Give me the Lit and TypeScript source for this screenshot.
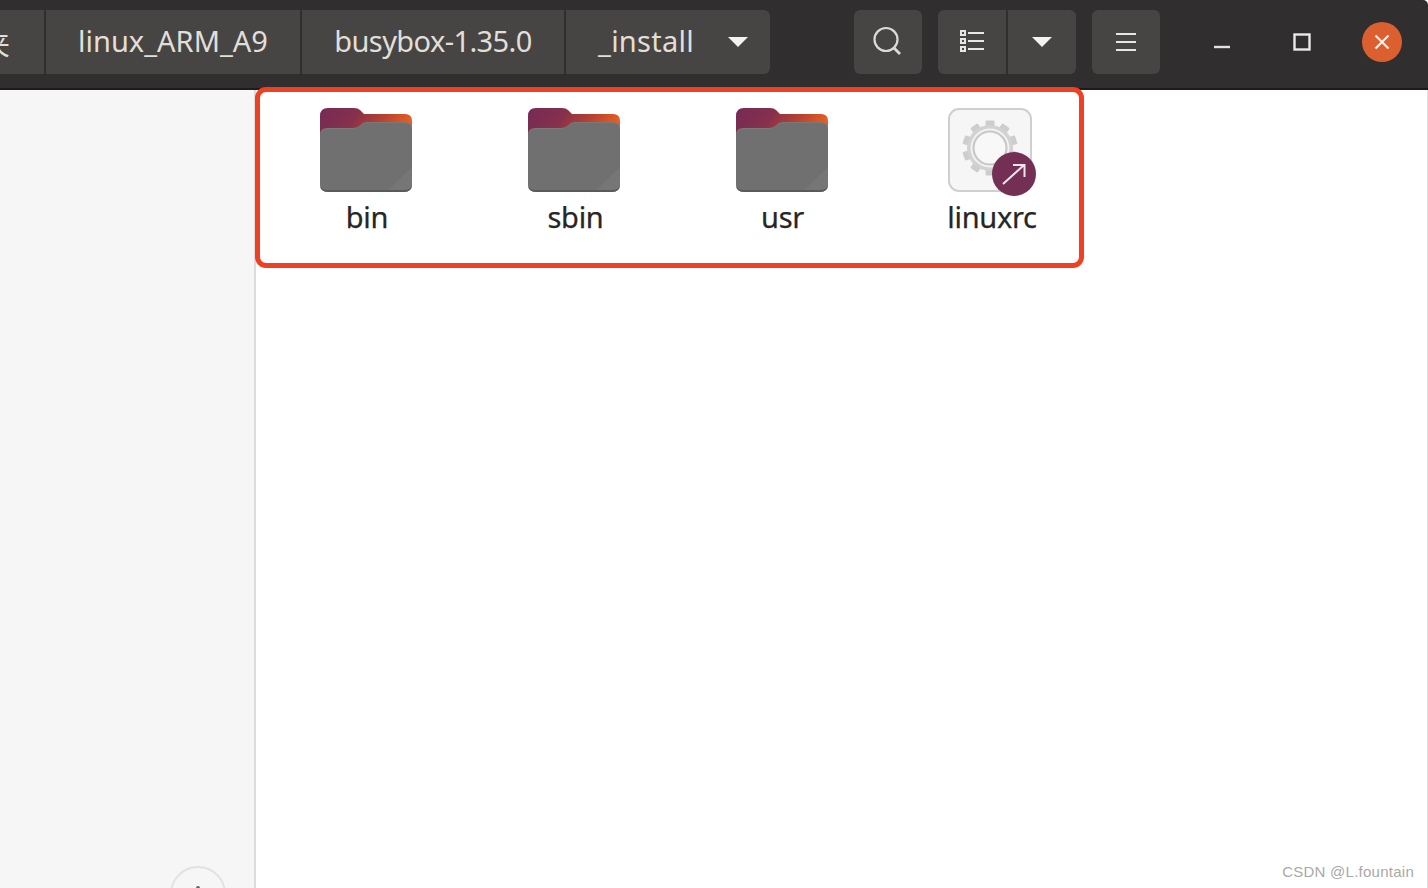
import { LitElement, html, css, svg } from "lit";
import { customElement } from "lit/decorators.js";

const folder = () => html`<svg class="icon soft" viewBox="0 0 92 84" width="92" height="84">
  <defs>
    <linearGradient id="fg" x1="0" y1="0" x2="1" y2="0.3">
      <stop offset="0" stop-color="#752a57"/><stop offset="0.4" stop-color="#86304c"/><stop offset="0.7" stop-color="#b8432f"/><stop offset="1" stop-color="#e95f22"/>
    </linearGradient>
  </defs>
  <path d="M8 0H34Q38 0 40 2L44 6H85Q92 6 92 13V40H0V8Q0 0 8 0Z" fill="url(#fg)"/>
  <path d="M7 20H33Q37 20 40 17.500L42 15.500Q44 14 47 14H85Q92 14 92 21V76Q92 84 84 84H8Q0 84 0 76V27Q0 20 7 20Z" fill="#797979"/>
  <path d="M7 21H33Q37 21 40 18.500L42 16.500Q44 15 47 15H85Q92 15 92 22V76Q92 82 84 82H8Q0 82 0 76V28Q0 21 7 21Z" fill="#707070"/>
  <path d="M92 59V76Q92 82 84 82H68Z" fill="#767676"/>
  <path d="M0 76Q0 84 8 84H84Q92 84 92 76Q92 82 84 82H8Q0 82 0 76Z" fill="#5a5a5a"/>
</svg>`;

const teeth = [0, 36, 72, 108, 144, 180, 216, 252, 288, 324];

const fileIcon = () => html`<svg class="icon soft" viewBox="0 0 92 88" width="92" height="88">
  <rect x="1" y="1" width="82" height="82" rx="10" fill="#f6f6f6" stroke="#cfcfcf" stroke-width="2"/>
  ${teeth.map((a) => svg`<rect x="37.500" y="12.500" width="9" height="6" rx="1" fill="#cdcdcd" transform="rotate(${a} 42 40)"/>`)}
  <circle cx="42" cy="40" r="23" fill="#d2d2d2"/>
  <circle cx="42" cy="40" r="19.500" fill="#f3f3f3"/>
  <circle cx="42" cy="40" r="16.500" fill="#f8f8f8" stroke="#c8c8c8" stroke-width="2.200"/>
  <circle cx="66" cy="66" r="22" fill="#742f54"/>
  <path d="M55 76L76 57M65 57H76.500V69" fill="none" stroke="#f0e6ea" stroke-width="2"/>
</svg>`;

@customElement("app-root")
export class AppRoot extends LitElement {
  static styles = css`
    :host { display: block; width: 1428px; height: 888px; overflow: hidden; background: #fff; position: relative; font-family: "Noto Sans", "Noto Sans CJK SC", sans-serif; }
    .header { border-bottom: 2px solid #1d1c1c; background: #302e2e; display: flex; align-items: flex-start; padding: 10px 26px 0 0; box-sizing: border-box; height: 90px; border-top-right-radius: 5px; }
    .group { display: flex; height: 64px; gap: 2px; }
    .seg { background: #474544; color: #e2ded8; display: flex; align-items: center; justify-content: center; font-size: 29px; white-space: nowrap; overflow: hidden; }
    .text { padding-bottom: 3px; box-sizing: border-box; }
    .group > .seg:last-child { border-radius: 0 6px 6px 0; }
    .clipped { width: 44px; justify-content: flex-end; }
    .clipped span { padding: 4px 34px 0 0; font-size: 28px; }
    .p1 { width: 254px; }
    .p2 { width: 262px; letter-spacing: -0.6px; }
    .p3 { width: 204px; gap: 34px; padding-left: 32px; box-sizing: border-box; justify-content: flex-start; letter-spacing: 0.25px; }
    .p3 svg { margin-top: 3px; }
    .right { margin-left: auto; display: flex; }
    .btn { width: 68px; height: 64px; background: #474544; border-radius: 6px; display: flex; align-items: center; justify-content: center; }
    .search svg { margin: -2px 2px 0 0; }
    .tools { display: flex; gap: 16px; }
    .view { gap: 2px; }
    .view .seg:first-child { width: 68px; border-radius: 6px 0 0 6px; }
    .view .seg:first-child svg { margin-bottom: 2px; }
    .view .seg:last-child { width: 68px; }
    .wm { display: flex; gap: 40px; margin-left: 42px; height: 64px; align-items: center; }
    .wm > div { width: 40px; height: 40px; display: flex; align-items: center; justify-content: center; }
    .close { background: #dc5f30; border-radius: 50%; }
    svg { display: block; }
    .soft { filter: blur(0.45px); }
    .body { display: flex; height: 798px; }
    .side { width: 254px; background: #f6f6f6; border-right: 2px solid #dcdcdc; position: relative; overflow: hidden; flex: none; }
    .fab { position: absolute; left: 170px; top: 776px; width: 52px; height: 52px; border: 2px solid #e2e2e2; border-radius: 50%; }
    .fab::after { content: ""; position: absolute; left: 24px; top: 18px; width: 4px; height: 4px; border-radius: 50%; background: #666; }
    .main { flex: 1; border-right: 1px solid #e0e0e0; display: flex; align-items: flex-start; padding: 18px 0 0 6px; }
    .item { width: 208px; display: flex; flex-direction: column; align-items: center; font-size: 29px; letter-spacing: -0.3px; color: #262626; line-height: 38px; -webkit-text-stroke: 0.25px #262626; }
    .item .icon { height: 84px; margin-bottom: 6px; }
    .item.file .icon { margin: 0 0 2px 8px; height: 88px; }
    .item.file span { margin-left: 4px; }
    .item.bin span { margin-left: 2px; }
    .item.nudge span { margin-left: 3px; }
    .item.usr span { margin-left: 1px; }
    .mark { position: absolute; left: 255px; top: 87px; width: 829px; height: 181px; box-sizing: border-box; border: 5px solid #f04023; border-radius: 11px; pointer-events: none; }
    .credit { position: absolute; right: 14px; top: 863px; font-family: "Liberation Sans", sans-serif; font-size: 15px; line-height: 18px; color: #a9a9a9; letter-spacing: 0.25px; }
  `;

  render() {
    const caret = html`<svg width="20" height="12" viewBox="0 0 20 12"><path d="M0 1H20L10 11Z" fill="#f4f2ef"/></svg>`;
    return html`
      <div class="header">
        <div class="group">
          <div class="seg clipped text"><span>夹</span></div>
          <div class="seg p1 text">linux_ARM_A9</div>
          <div class="seg p2 text">busybox-1.35.0</div>
          <div class="seg p3 text">_install ${caret}</div>
        </div>
        <div class="right">
          <div class="tools">
            <div class="btn search">
              <svg width="30" height="30" viewBox="0 0 30 30" fill="none" stroke="#dcdad6" stroke-width="2.200"><circle cx="14" cy="13.500" r="11.500"/><path d="M22 22L28 28" stroke-width="2.800"/></svg>
            </div>
            <div class="group view">
              <div class="seg">
                <svg width="24" height="22" viewBox="0 0 24 22" fill="none" stroke="#e8e6e3"><g stroke-width="2"><rect x="1" y="1" width="4" height="4"/><rect x="1" y="9" width="4" height="4"/><rect x="1" y="17" width="4" height="4"/></g><path d="M8 3H24M8 11H24M8 19H24" stroke-width="2"/></svg>
              </div>
              <div class="seg">${caret}</div>
            </div>
            <div class="btn">
              <svg width="22" height="20" viewBox="0 0 22 20" fill="none" stroke="#e8e6e3" stroke-width="2.200"><path d="M1 2H21M1 10H21M1 18H21"/></svg>
            </div>
          </div>
          <div class="wm">
            <div><svg width="18" height="14" viewBox="0 0 18 14"><path d="M1 12H17" stroke="#e4e2df" stroke-width="2.400"/></svg></div>
            <div><svg width="18" height="18" viewBox="0 0 18 18"><rect x="1.500" y="1.500" width="15" height="15" fill="none" stroke="#eceae8" stroke-width="2.400"/></svg></div>
            <div class="close"><svg width="16" height="16" viewBox="0 0 16 16"><path d="M1.500 1.500L14.500 14.500M14.500 1.500L1.500 14.500" stroke="#fbeee8" stroke-width="2.200"/></svg></div>
          </div>
        </div>
      </div>
      <div class="body">
        <div class="side"><div class="fab"></div></div>
        <div class="main">
          <div class="item bin">${folder()}<span>bin</span></div>
          <div class="item nudge">${folder()}<span>sbin</span></div>
          <div class="item usr">${folder()}<span>usr</span></div>
          <div class="item file">${fileIcon()}<span>linuxrc</span></div>
        </div>
      </div>
      <div class="mark"></div>
      <div class="credit">CSDN @L.fountain</div>
    `;
  }
}
